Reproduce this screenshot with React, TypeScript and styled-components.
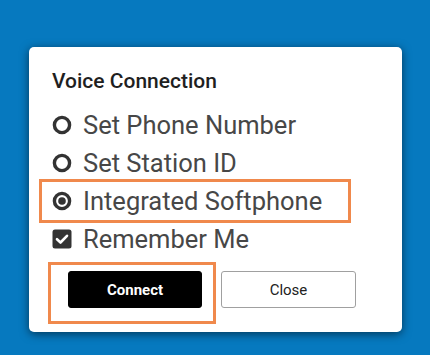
import React from 'react';
import styled, { createGlobalStyle } from 'styled-components';

const GlobalStyle = createGlobalStyle`
  html, body {
    margin: 0;
    padding: 0;
    background: #0679bf;
    font-family: Roboto, "Liberation Sans", Arial, sans-serif;
  }
`;

const Page = styled.div`
  width: 430px;
  height: 355px;
  padding: 47px 0 0 29px;
  box-sizing: border-box;
  overflow: hidden;
`;

const Dialog = styled.div`
  width: 373px;
  height: 285px;
  box-sizing: border-box;
  padding: 22px 23px 8px;
  background: #ffffff;
  border-radius: 5px;
  box-shadow: 0 2px 10px rgba(0, 0, 0, 0.55);
  display: flex;
  flex-direction: column;
`;

const Title = styled.h2`
  margin: 0 0 13px;
  font-size: 21px;
  line-height: 24px;
  font-weight: 500;
  color: #1f1f1f;
`;

const Options = styled.div`
  display: flex;
  flex-direction: column;
`;

const Row = styled.label<{ $highlight?: boolean }>`
  display: flex;
  align-items: center;
  gap: 11px;
  height: 38px;
  font-size: 25.5px;
  line-height: 38px;
  color: #474747;
  margin-left: -10px;
  padding-left: 10px;
  width: 306px;
  box-sizing: border-box;
  white-space: nowrap;
  outline: ${(p) => (p.$highlight ? '3px solid #f0894c' : 'none')};
`;

const Icon = styled.svg`
  flex: none;
  width: 20px;
  height: 20px;
`;

const Actions = styled.div`
  display: flex;
  align-items: flex-start;
  gap: 5px;
  margin: 4px 0 0 -4px;
`;

const ConnectFrame = styled.div`
  border: 3px solid #f0894c;
  padding: 6px 11px 13px 17px;
`;

const Button = styled.button<{ $primary?: boolean }>`
  width: ${(p) => (p.$primary ? '134px' : '135px')};
  height: 37px;
  margin-top: ${(p) => (p.$primary ? '0' : '9px')};
  border-radius: 3px;
  border: 1px solid ${(p) => (p.$primary ? '#000000' : '#a0a0a0')};
  background: ${(p) => (p.$primary ? '#000000' : '#ffffff')};
  color: ${(p) => (p.$primary ? '#ffffff' : '#222222')};
  font-family: Roboto, "Liberation Sans", Arial, sans-serif;
  font-size: 15px;
  font-weight: ${(p) => (p.$primary ? 700 : 400)};
  cursor: pointer;
`;

const Radio = ({ checked }: { checked?: boolean }) => (
  <Icon viewBox="0 0 20 20">
    <circle cx="10" cy="10" r="7.6" fill="none" stroke="#333" strokeWidth="3.4" />
    {checked && <circle cx="10" cy="10" r="3.8" fill="#333" />}
  </Icon>
);

const Checkbox = () => (
  <Icon viewBox="0 0 20 20">
    <rect x="0.5" y="0.5" width="19" height="19" rx="2.5" fill="#333" />
    <path d="M5 10.2 L8.5 13.5 L15 6.8" fill="none" stroke="#fff" strokeWidth="2.6" strokeLinecap="round" strokeLinejoin="round" />
  </Icon>
);

const options = [
  { label: 'Set Phone Number', checked: false },
  { label: 'Set Station ID', checked: false },
  { label: 'Integrated Softphone', checked: true },
];

export default function App() {
  return (
    <>
      <GlobalStyle />
      <Page>
        <Dialog>
          <Title>Voice Connection</Title>
          <Options>
            {options.map((o) => (
              <Row key={o.label} $highlight={o.checked}>
                <Radio checked={o.checked} />
                {o.label}
              </Row>
            ))}
            <Row>
              <Checkbox />
              Remember Me
            </Row>
          </Options>
          <Actions>
            <ConnectFrame>
              <Button $primary>Connect</Button>
            </ConnectFrame>
            <Button>Close</Button>
          </Actions>
        </Dialog>
      </Page>
    </>
  );
}
